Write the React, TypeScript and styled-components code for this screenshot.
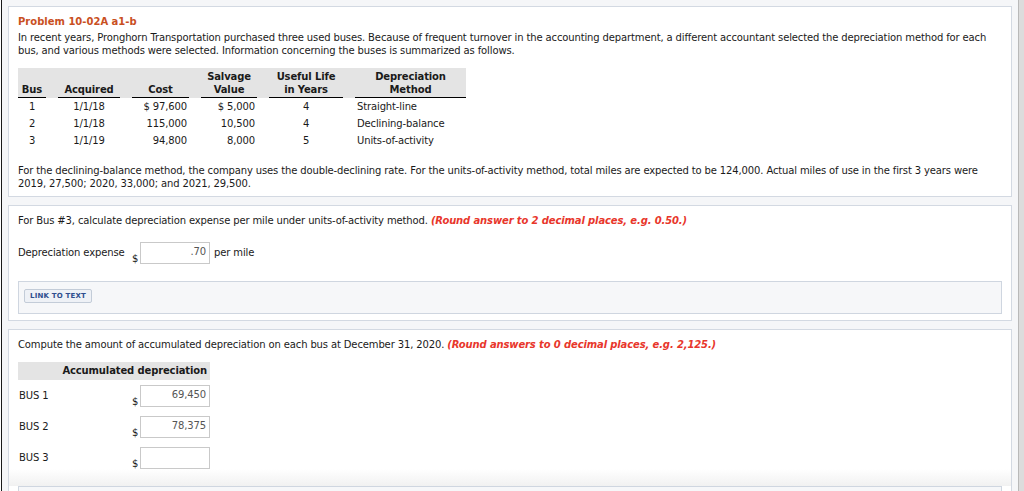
import styled, { createGlobalStyle } from 'styled-components';

const GlobalStyle = createGlobalStyle`
  html, body {
    margin: 0;
    padding: 0;
    background: #ffffff;
  }
  body {
    font-family: "DejaVu Sans", Verdana, sans-serif;
    font-size: 10px;
    line-height: 13px;
    letter-spacing: -0.13px;
    color: #1a1a1a;
    overflow: hidden;
  }
`;

const Screen = styled.div`
  display: flex;
  height: 100vh;
  padding-left: 1px;
  box-sizing: border-box;
`;

const Page = styled.div`
  flex: 1;
  border-left: 1px solid #1a1a1a;
  background: #f5f6f8;
  padding: 6px 6px 0 6px;
  display: flex;
  flex-direction: column;
  gap: 8px;
  overflow: hidden;
`;

const ScrollStrip = styled.div`
  width: 5px;
  background: #dcdcdc;
  border-left: 1px solid #b9b9b9;
`;

const Panel = styled.section`
  background: #ffffff;
  border: 1px solid #d3d9e2;
  padding: 8px 9px 6px 9px;
  flex-shrink: 0;
`;

const Title = styled.h1`
  margin: 0 0 3px 0;
  font-size: 10px;
  line-height: 13px;
  font-weight: bold;
  letter-spacing: 0;
  color: #c9501f;
`;

const Text = styled.p<{ $gap?: number }>`
  margin: ${(p) => p.$gap ?? 0}px 0 0 0;
`;

const Hint = styled.span`
  color: #e8362b;
  font-weight: bold;
  font-style: italic;
`;

const DataTable = styled.table`
  margin-top: 11px;
  border-collapse: collapse;

  thead tr {
    background: #e4e4e4;
  }

  th {
    padding: 2px 6px 0 6px;
    font-weight: bold;
    text-align: center;
    vertical-align: bottom;
  }

  td {
    padding: 0 6px;
    height: 17px;
  }

  th:first-child,
  td:first-child {
    padding-left: 0;
  }

  th:last-child,
  td:last-child {
    padding-right: 0;
  }
`;

const HeadLine = styled.div<{ $w: number }>`
  width: ${(p) => p.$w}px;
  padding-bottom: 1px;
  border-bottom: 1px solid #000;
`;

const Cell = styled.td<{ $align: 'left' | 'center' | 'right' }>`
  text-align: ${(p) => p.$align};
  ${(p) => (p.$align === 'right' ? 'padding-right: 8px !important;' : '')}
  ${(p) => (p.$align === 'left' ? 'padding-left: 8px !important;' : '')}
`;

const AnswerRow = styled.div`
  display: flex;
  align-items: flex-start;
  margin-top: 15px;
`;

const Label = styled.div`
  width: 113px;
  padding-top: 4px;
`;

const Dollar = styled.span`
  align-self: flex-end;
  width: 8px;
  padding-left: 1px;
  line-height: 13px;
  margin-bottom: -1px;
`;

const AmountBox = styled.div`
  box-sizing: border-box;
  width: 70px;
  height: 22px;
  border: 1px solid #c9c9c9;
  background: #fff;
  text-align: right;
  padding-right: 3px;
  color: #555;
  line-height: 18px;
  margin-right: 4px;
`;

const After = styled.div`
  padding-top: 4px;
`;

const LinkBox = styled.div`
  margin-top: 17px;
  background: #f6f7f9;
  border: 1px solid #cfd6e0;
  padding: 7px 5px 10px 5px;
`;

const LinkButton = styled.button`
  display: block;
  height: 14px;
  padding: 0 5px;
  font-family: "DejaVu Sans", Verdana, sans-serif;
  font-size: 7px;
  font-weight: bold;
  letter-spacing: 0.2px;
  color: #2f4e8e;
  background: #eef1f6;
  border: 1px solid #c3ccd8;
  border-radius: 2px;
  line-height: 12px;
`;

const AccumHead = styled.div`
  margin-top: 11px;
  width: 189px;
  height: 18px;
  background: #e4e4e4;
  font-weight: bold;
  text-align: right;
  line-height: 18px;
  padding-right: 3px;
`;

const BusRows = styled.div`
  display: flex;
  flex-direction: column;
  gap: 9px;
  margin-top: 5px;
`;

const BusRow = styled.div`
  display: flex;
  align-items: flex-start;
`;

const BusLabel = styled.div`
  width: 113px;
  padding: 4px 0 0 1px;
  box-sizing: border-box;
`;

const Shade = styled.div`
  height: 17px;
  margin: 0 -9px;
  background: linear-gradient(#ffffff, #f1f1f1);
`;

const BottomBox = styled.div`
  height: 30px;
  background: #f6f7f9;
  border: 1px solid #cfd6e0;
`;

const Panel3 = styled(Panel)`
  padding-bottom: 0;
`;

interface IBus {
  bus: string;
  acquired: string;
  cost: string;
  salvage: string;
  life: string;
  method: string;
}

const buses: IBus[] = [
  { bus: '1', acquired: '1/1/18', cost: '$ 97,600', salvage: '$ 5,000', life: '4', method: 'Straight-line' },
  { bus: '2', acquired: '1/1/18', cost: '115,000', salvage: '10,500', life: '4', method: 'Declining-balance' },
  { bus: '3', acquired: '1/1/19', cost: '94,800', salvage: '8,000', life: '5', method: 'Units-of-activity' },
];

const accumulated = [
  { name: 'BUS 1', value: '69,450' },
  { name: 'BUS 2', value: '78,375' },
  { name: 'BUS 3', value: '' },
];

export default function App() {
  return (
    <>
      <GlobalStyle />
      <Screen>
        <Page>
          <Panel>
            <Title>Problem 10-02A a1-b</Title>
            <Text>
              In recent years, Pronghorn Transportation purchased three used buses. Because of frequent turnover in
              the accounting department, a different accountant selected the depreciation method for each bus, and
              various methods were selected. Information concerning the buses is summarized as follows.
            </Text>
            <DataTable>
              <thead>
                <tr>
                  <th><HeadLine $w={28}>Bus</HeadLine></th>
                  <th><HeadLine $w={62}>Acquired</HeadLine></th>
                  <th><HeadLine $w={57}>Cost</HeadLine></th>
                  <th><HeadLine $w={56}>Salvage<br />Value</HeadLine></th>
                  <th><HeadLine $w={74}>Useful Life<br />in Years</HeadLine></th>
                  <th><HeadLine $w={111}>Depreciation<br />Method</HeadLine></th>
                </tr>
              </thead>
              <tbody>
                {buses.map((b) => (
                  <tr key={b.bus}>
                    <Cell $align="center">{b.bus}</Cell>
                    <Cell $align="center">{b.acquired}</Cell>
                    <Cell $align="right">{b.cost}</Cell>
                    <Cell $align="right">{b.salvage}</Cell>
                    <Cell $align="center">{b.life}</Cell>
                    <Cell $align="left">{b.method}</Cell>
                  </tr>
                ))}
              </tbody>
            </DataTable>
            <Text $gap={15}>
              For the declining-balance method, the company uses the double-declining rate. For the units-of-activity
              method, total miles are expected to be 124,000. Actual miles of use in the first 3 years were 2019,
              27,500; 2020, 33,000; and 2021, 29,500.
            </Text>
          </Panel>

          <Panel>
            <Text>
              For Bus #3, calculate depreciation expense per mile under units-of-activity method.{' '}
              <Hint>(Round answer to 2 decimal places, e.g. 0.50.)</Hint>
            </Text>
            <AnswerRow>
              <Label>Depreciation expense</Label>
              <Dollar>$</Dollar>
              <AmountBox>.70</AmountBox>
              <After>per mile</After>
            </AnswerRow>
            <LinkBox>
              <LinkButton>LINK TO TEXT</LinkButton>
            </LinkBox>
          </Panel>

          <Panel3>
            <Text>
              Compute the amount of accumulated depreciation on each bus at December 31, 2020.{' '}
              <Hint>(Round answers to 0 decimal places, e.g. 2,125.)</Hint>
            </Text>
            <AccumHead>Accumulated depreciation</AccumHead>
            <BusRows>
              {accumulated.map((a) => (
                <BusRow key={a.name}>
                  <BusLabel>{a.name}</BusLabel>
                  <Dollar>$</Dollar>
                  <AmountBox>{a.value}</AmountBox>
                </BusRow>
              ))}
            </BusRows>
            <Shade />
            <BottomBox />
          </Panel3>
        </Page>
        <ScrollStrip />
      </Screen>
    </>
  );
}
